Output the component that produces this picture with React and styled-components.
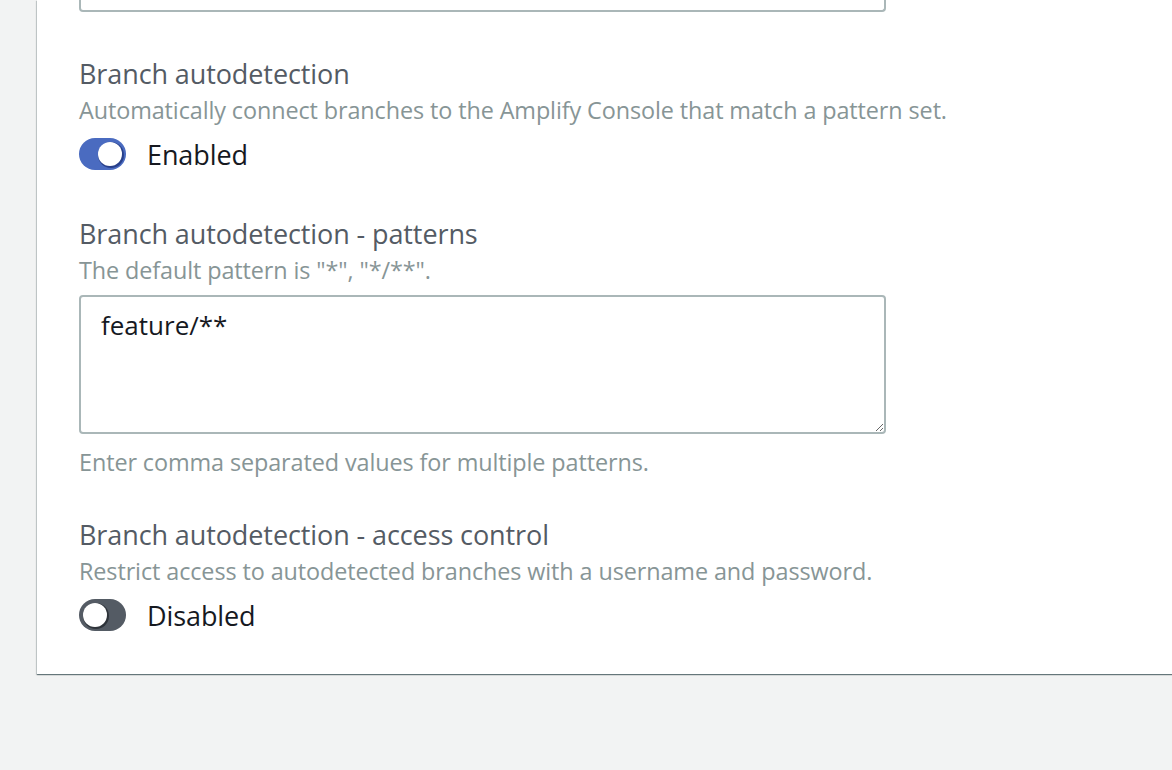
import React from "react";
import styled, { createGlobalStyle } from "styled-components";

const Global = createGlobalStyle`
  html, body { margin: 0; padding: 0; background: #f2f3f3; }
  body { font-family: "Open Sans", "Noto Sans", sans-serif; overflow: hidden; }
  #root { width: 1172px; height: 770px; overflow: hidden; }
`;

const Page = styled.div`
  width: 1172px;
  height: 770px;
  background: #f2f3f3;
  padding-left: 37px;
  box-sizing: border-box;
`;

const Panel = styled.div`
  width: 1200px;
  background: #fff;
  padding: 0 0 41px 42px;
  box-sizing: border-box;
  box-shadow: 0 1px 1px 0 rgba(0, 28, 36, 0.45), 1px 1px 1px 0 rgba(0, 28, 36, 0.1),
    -1px 1px 1px 0 rgba(0, 28, 36, 0.15);
`;

const InputStub = styled.div`
  width: 807px;
  height: 12px;
  box-sizing: border-box;
  border: 2px solid #aab7b8;
  border-top: none;
  border-radius: 0 0 4px 4px;
`;

const Field = styled.div`
  margin-top: ${(p) => p.$gap}px;
  display: flex;
  flex-direction: column;
  align-items: flex-start;
`;

const Label = styled.div`
  font-size: 27px;
  line-height: 36px;
  color: #545b64;
  font-weight: 400;
  letter-spacing: -0.1px;
`;

const Desc = styled.div`
  font-size: 23.4px;
  line-height: 36px;
  color: #879596;
  letter-spacing: -0.1px;
`;

const Hint = styled(Desc)`
  margin-top: 10px;
`;

const ToggleRow = styled.label`
  margin-top: 8px;
  display: flex;
  align-items: center;
  gap: 21px;
  height: 36px;
`;

const Track = styled.span`
  width: 47px;
  height: 32px;
  border-radius: 16px;
  background: ${(p) => (p.$on ? "#4a6bc0" : "#545b64")};
  display: flex;
  align-items: center;
  justify-content: ${(p) => (p.$on ? "flex-end" : "flex-start")};
  padding: 0 4px;
  box-sizing: border-box;
`;

const Knob = styled.span`
  width: 24px;
  height: 24px;
  border-radius: 50%;
  background: #fff;
  box-shadow: ${(p) =>
    p.$on
      ? "1px 1px 0 1px rgba(30, 50, 120, 0.75)"
      : "1px 1px 0 1px rgba(30, 34, 40, 0.7)"};
`;

const ToggleText = styled.span`
  font-size: 27px;
  color: #16191f;
  letter-spacing: -0.1px;
`;

const TextArea = styled.textarea`
  margin-top: 7px;
  width: 807px;
  height: 139px;
  box-sizing: border-box;
  border: 2px solid #aab7b8;
  border-radius: 4px;
  padding: 11px 20px;
  font-family: "Open Sans", "Noto Sans", sans-serif;
  font-size: 26px;
  line-height: 34px;
  color: #16191f;
  resize: vertical;
  outline: none;
  display: block;
`;

function Toggle({ on, children }) {
  return (
    <ToggleRow>
      <Track $on={on}>
        <Knob $on={on} />
      </Track>
      <ToggleText>{children}</ToggleText>
    </ToggleRow>
  );
}

export default function App() {
  return (
    <Page>
      <Global />
      <Panel>
        <InputStub />
        <Field $gap={44}>
          <Label>Branch autodetection</Label>
          <Desc>Automatically connect branches to the Amplify Console that match a pattern set.</Desc>
          <Toggle on>Enabled</Toggle>
        </Field>
        <Field $gap={44}>
          <Label>Branch autodetection - patterns</Label>
          <Desc>The default pattern is "*", "*/**".</Desc>
          <TextArea defaultValue="feature/**" />
          <Hint>Enter comma separated values for multiple patterns.</Hint>
        </Field>
        <Field $gap={37}>
          <Label>Branch autodetection - access control</Label>
          <Desc>Restrict access to autodetected branches with a username and password.</Desc>
          <Toggle on={false}>Disabled</Toggle>
        </Field>
      </Panel>
    </Page>
  );
}
